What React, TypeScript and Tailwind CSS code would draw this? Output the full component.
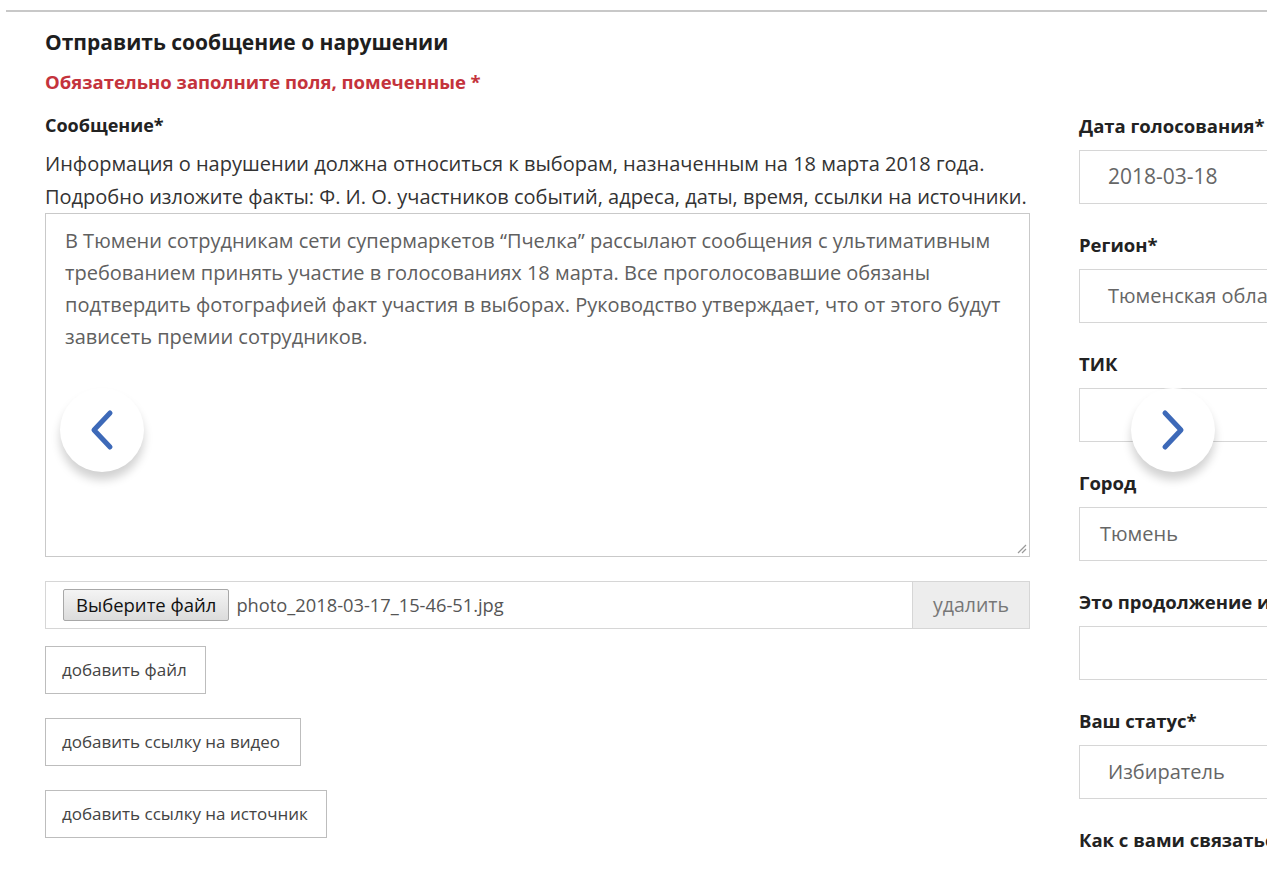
import React from "react";

const font = { fontFamily: '"Open Sans", "Noto Sans", sans-serif' };

const Chevron: React.FC<{ dir: "left" | "right" }> = ({ dir }) => (
  <svg width="28" height="42" viewBox="0 0 28 42" fill="none">
    <path
      d={dir === "left" ? "M22 4 L6 21 L22 38" : "M6 4 L22 21 L6 38"}
      stroke="#3d69b8"
      strokeWidth="5"
      strokeLinecap="round"
      strokeLinejoin="round"
    />
  </svg>
);

const NavButton: React.FC<{ dir: "left" | "right"; className: string }> = ({ dir, className }) => (
  <div
    className={`absolute w-[84px] h-[84px] rounded-full bg-white flex items-center justify-center shadow-[0_8px_10px_rgba(0,0,0,0.18)] ${className}`}
  >
    <Chevron dir={dir} />
  </div>
);

const SideField: React.FC<{ label: string; value?: string; pad?: string; size?: string }> = ({
  label,
  value,
  pad = "pl-7",
  size = "text-[20px]",
}) => (
  <div className="flex flex-col">
    <div className="text-[18.5px] font-bold text-[#222] leading-[24px] whitespace-nowrap">{label}</div>
    <div className={`mt-[12px] h-[54px] border border-[#d6d6d6] flex items-center ${pad} ${size} text-[#666] whitespace-nowrap`}>
      {value}
    </div>
  </div>
);

const AddButton: React.FC<{ text: string; w: string }> = ({ text, w }) => (
  <button className={`${w} h-[48px] border border-[#bdbdbd] bg-white text-left pl-4 text-[17px] text-[#444] whitespace-nowrap`}>
    {text}
  </button>
);

export default function App() {
  return (
    <div className="w-[1280px] h-[874px] bg-white relative overflow-hidden" style={font}>
      <div className="w-[1267px] h-full overflow-hidden relative">
        <div className="ml-[6px] mt-[10px] h-[2px] bg-[#c8c8c8]" />
        <div className="flex pl-[45px] pt-[16px]">
          <div className="w-[985px] shrink-0 flex flex-col">
            <h1 className="text-[21px] font-bold text-[#1e1e1e] leading-[28px]">Отправить сообщение о нарушении</h1>
            <div className="mt-[14px] text-[18.5px] font-bold text-[#c4333c] leading-[24px]">
              Обязательно заполните поля, помеченные *
            </div>
            <div className="mt-[19px] text-[18px] font-bold text-[#222] leading-[24px]">Сообщение*</div>
            <div className="mt-[10px] text-[20px] text-[#333] leading-[33px] whitespace-nowrap">
              <div>Информация о нарушении должна относиться к выборам, назначенным на 18 марта 2018 года.</div>
              <div>Подробно изложите факты: Ф. И. О. участников событий, адреса, даты, время, ссылки на источники.</div>
            </div>
            <div className="h-[344px] border border-[#c9c9c9] relative px-[19px] pt-[11px]">
              <p className="text-[20px] text-[#606060] leading-[32px] whitespace-nowrap">
                В Тюмени сотрудникам сети супермаркетов “Пчелка” рассылают сообщения с ультимативным
                <br />
                требованием принять участие в голосованиях 18 марта. Все проголосовавшие обязаны
                <br />
                подтвердить фотографией факт участия в выборах. Руководство утверждает, что от этого будут
                <br />
                зависеть премии сотрудников.
              </p>
              <svg className="absolute right-[2px] bottom-[2px]" width="12" height="12" viewBox="0 0 12 12">
                <path d="M11 3 L3 11 M11 7 L7 11" stroke="#999" strokeWidth="1.2" />
              </svg>
            </div>
            <div className="mt-[24px] h-[48px] border border-[#d6d6d6] flex items-center">
              <div className="flex-1 flex items-center pl-[17px]">
                <button className="h-[32px] px-[12px] border border-[#a8a8a8] rounded-[2px] bg-gradient-to-b from-[#f4f4f4] to-[#dcdcdc] text-[18.5px] leading-none text-[#111]">
                  Выберите файл
                </button>
                <span className="ml-[7px] text-[18.3px] text-[#555]">photo_2018-03-17_15-46-51.jpg</span>
              </div>
              <div className="w-[117px] h-full bg-[#ededed] border-l border-[#d6d6d6] flex items-center justify-center text-[19.5px] text-[#777]">
                удалить
              </div>
            </div>
            <div className="mt-[17px] flex flex-col gap-[24px] items-start">
              <AddButton text="добавить файл" w="w-[161px]" />
              <AddButton text="добавить ссылку на видео" w="w-[256px]" />
              <AddButton text="добавить ссылку на источник" w="w-[282px]" />
            </div>
          </div>
          <div className="ml-[49px] w-[260px] shrink-0 pt-[86px] flex flex-col gap-[29px]">
            <SideField label="Дата голосования*" value="2018-03-18" size="text-[21px]" />
            <SideField label="Регион*" value="Тюменская область" />
            <SideField label="ТИК" />
            <SideField label="Город" value="Тюмень" pad="pl-5" />
            <SideField label="Это продолжение истории?" />
            <SideField label="Ваш статус*" value="Избиратель" />
            <div className="text-[18.5px] font-bold text-[#222] leading-[24px] whitespace-nowrap">Как с вами связаться?</div>
          </div>
        </div>
        <NavButton dir="left" className="left-[60px] top-[388px]" />
        <NavButton dir="right" className="left-[1131px] top-[388px]" />
      </div>
    </div>
  );
}
